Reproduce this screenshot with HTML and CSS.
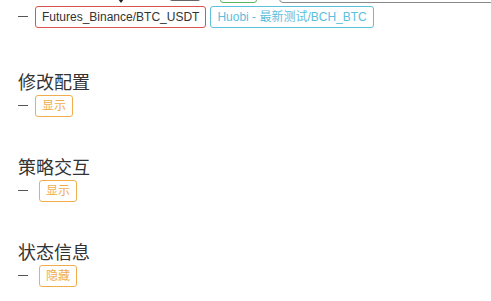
FILE: index.html
```html
<!DOCTYPE html>
<html lang="zh">
<head>
<meta charset="utf-8">
<title>策略</title>
<link rel="stylesheet" href="styles.css">
</head>
<body>
<div class="page">
  <div class="row prev">
    <span class="caret"></span>
    <span class="btn-dark"></span>
    <span class="tag-green"></span>
    <span class="input-box"></span>
  </div>
  <div class="row first">
    <span class="dash"></span>
    <span class="tag tag-red">Futures_Binance/BTC_USDT</span>
    <span class="tag tag-blue">Huobi - 最新测试/BCH_BTC</span>
  </div>
  <section class="section">
    <h2 class="title">修改配置</h2>
    <div class="row">
      <span class="dash"></span>
      <span class="tag tag-orange">显示</span>
    </div>
  </section>
  <section class="section">
    <h2 class="title">策略交互</h2>
    <div class="row wide">
      <span class="dash"></span>
      <span class="tag tag-orange">显示</span>
    </div>
  </section>
  <section class="section">
    <h2 class="title">状态信息</h2>
    <div class="row wide">
      <span class="dash"></span>
      <span class="tag tag-orange">隐藏</span>
    </div>
  </section>
</div>
</body>
</html>
```

FILE: styles.css
```css
html, body {
  margin: 0;
  padding: 0;
  background: #ffffff;
  overflow: hidden;
}
.page {
  display: flex;
  flex-direction: column;
  padding: 0 0 0 18px;
  font-family: "Liberation Sans", "Noto Sans CJK SC", sans-serif;
  font-size: 12px;
  color: #333333;
}
.row {
  display: flex;
  align-items: center;
  height: 22px;
  gap: 7px;
}
.row.wide {
  gap: 11px;
}
.prev {
  height: 20px;
  margin-top: -17px;
  align-items: flex-end;
  gap: 0;
}
.caret {
  width: 0;
  height: 0;
  margin-left: 100px;
  border-left: 3px solid transparent;
  border-right: 3px solid transparent;
  border-top: 4px solid #222222;
}
.btn-dark {
  width: 30px;
  height: 18px;
  margin-left: 46px;
  margin-bottom: 2px;
  border-bottom: 2px solid #666666;
  border-radius: 0 0 2px 2px;
}
.tag-green {
  width: 35px;
  height: 20px;
  margin-left: 20px;
  border: 1px solid #5cb85c;
  border-radius: 3px;
}
.input-box {
  flex: 1;
  height: 20px;
  margin-left: 22px;
  margin-right: -10px;
  border: 1px solid #8a8a8a;
  border-radius: 4px;
}
.first {
  margin-top: 3px;
}
.dash {
  display: block;
  width: 10px;
  height: 1px;
  margin-top: -1px;
  background: #555555;
}
.tag {
  display: inline-block;
  box-sizing: border-box;
  height: 22px;
  line-height: 20px;
  padding: 0 6px;
  border: 1px solid;
  border-radius: 3px;
  white-space: nowrap;
}
.tag-red {
  border-color: #d9534f;
  color: #333333;
}
.tag-blue {
  border-color: #5bc0de;
  color: #5bc0de;
  margin-left: -3px;
}
.tag-orange {
  border-color: #f0ad4e;
  color: #f0ad4e;
}
.section {
  display: flex;
  flex-direction: column;
}
.title {
  margin: 43px 0 4px 0;
  font-family: "Noto Sans CJK SC", sans-serif;
  font-size: 18px;
  font-weight: normal;
  line-height: 20px;
  color: #333333;
}
.section + .section .title {
  margin-top: 39px;
}
```
